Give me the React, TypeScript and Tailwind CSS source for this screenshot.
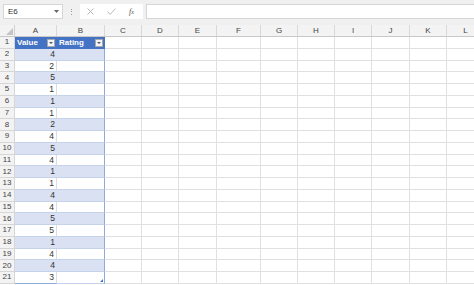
import React from 'react'

const COLS = ['A', 'B', 'C', 'D', 'E', 'F', 'G', 'H', 'I', 'J', 'K', 'L']
const GRID = 'grid grid-cols-[15px_42px_48px_37px_37px_38px_44px_37px_37px_37px_38px_37px_38px]'

const values = [4, 2, 5, 1, 1, 1, 2, 4, 5, 4, 1, 1, 4, 4, 5, 5, 1, 4, 4, 3]

function FilterButton() {
  return (
    <span className="absolute right-[2px] top-[2px] w-[8px] h-[8px] bg-[#f4f4f4] border border-[#a8a8a8] flex items-center justify-center">
      <svg width="4" height="2" viewBox="0 0 4 2">
        <path d="M0 0 L4 0 L2 2 Z" fill="#555" />
      </svg>
    </span>
  )
}

function FormulaBar() {
  return (
    <div className="h-[25px] bg-[#f0f0f0] flex items-start pt-[4px] pl-[3px]">
      {/* name box */}
      <div className="w-[60px] h-[15px] bg-white border border-[#d6d6d6] flex items-center justify-between pl-[4px] pr-[3px]">
        <span className="text-[8px] text-[#333]">E6</span>
        <svg width="5" height="3" viewBox="0 0 5 3">
          <path d="M0 0 L5 0 L2.5 3 Z" fill="#666" />
        </svg>
      </div>
      <div className="w-[17px] h-[15px] flex items-center justify-center">
        <div className="flex flex-col gap-[1.5px]">
          <span className="w-[1px] h-[1px] bg-[#999]" />
          <span className="w-[1px] h-[1px] bg-[#999]" />
          <span className="w-[1px] h-[1px] bg-[#999]" />
        </div>
      </div>
      {/* cancel / enter / fx */}
      <div className="w-[63px] h-[15px] bg-white flex items-center pl-[7px] gap-[13px]">
        <svg width="7" height="7" viewBox="0 0 7 7">
          <path d="M0.5 0.5 L6.5 6.5 M6.5 0.5 L0.5 6.5" stroke="#b0b0b0" strokeWidth="0.9" />
        </svg>
        <svg width="9" height="7" viewBox="0 0 9 7">
          <path d="M0.5 3.8 L3.2 6.3 L8.5 0.6" stroke="#b0b0b0" strokeWidth="0.9" fill="none" />
        </svg>
        <span className="text-[8px] italic text-[#555] font-['Liberation_Serif',serif] leading-none">
          f<span className="text-[6px]">x</span>
        </span>
      </div>
      <div className="w-[3px]" />
      <div className="flex-1 h-[15px] bg-white border-l border-y border-[#d6d6d6]" />
    </div>
  )
}

export default function App() {
  return (
    <div className="w-[474px] h-[285px] overflow-hidden bg-white font-['Liberation_Sans',Arial,sans-serif]">
      <FormulaBar />

      {/* column headers */}
      <div className={`${GRID} h-[12px] bg-[#f3f3f3] border-b border-[#c8c8c8]`}>
        <div className="relative border-r border-[#d0d0d0]">
          <svg className="absolute right-[1px] bottom-[1px]" width="7" height="7" viewBox="0 0 7 7">
            <path d="M7 0 L7 7 L0 7 Z" fill="#c4c4c4" />
          </svg>
        </div>
        {COLS.map((c) => (
          <div
            key={c}
            className="flex items-center justify-center text-[8px] text-[#444] border-r border-[#d8d8d8] leading-none"
          >
            {c}
          </div>
        ))}
      </div>

      {/* rows */}
      {Array.from({ length: 21 }, (_, i) => {
        const row = i + 1
        const isHeader = row === 1
        const banded = row % 2 === 0
        const last = row === 21
        return (
          <div key={row} className={`${GRID} h-[11.75px]`}>
            <div className="bg-[#f3f3f3] border-r border-b border-[#d6d6d6] flex items-center justify-center text-[8px] text-[#444] leading-none">
              {row}
            </div>

            {/* A */}
            {isHeader ? (
              <div className="relative bg-[#4472c4] text-white font-bold text-[8px] leading-none flex items-center pl-[2px]">
                Value
                <FilterButton />
              </div>
            ) : (
              <div
                className={`flex items-center justify-end pr-[2px] text-[8.5px] leading-none text-[#333] border-b ${
                  banded ? 'bg-[#d9e1f2] border-[#c5d2ec]' : 'bg-white border-[#c5d2ec] border-r border-r-[#dcdcdc]'
                } ${last ? 'border-b-[#8ea9db]' : ''}`}
              >
                {values[i - 1]}
              </div>
            )}

            {/* B */}
            {isHeader ? (
              <div className="relative bg-[#4472c4] text-white font-bold text-[8px] leading-none flex items-center pl-[2px]">
                Rating
                <FilterButton />
              </div>
            ) : (
              <div
                className={`relative border-r border-r-[#8ea9db] border-b ${
                  banded ? 'bg-[#d9e1f2] border-b-[#c5d2ec]' : 'bg-white border-b-[#c5d2ec]'
                } ${last ? 'border-b-[#8ea9db]' : ''}`}
              >
                {last && (
                  <svg className="absolute right-[1px] bottom-[1px]" width="3" height="3" viewBox="0 0 3 3">
                    <path d="M3 0 L3 3 L0 3 Z" fill="#4472c4" />
                  </svg>
                )}
              </div>
            )}

            {COLS.slice(2).map((c) => (
              <div key={c} className="border-r border-b border-[#e0e0e0]" />
            ))}
          </div>
        )
      })}
    </div>
  )
}
